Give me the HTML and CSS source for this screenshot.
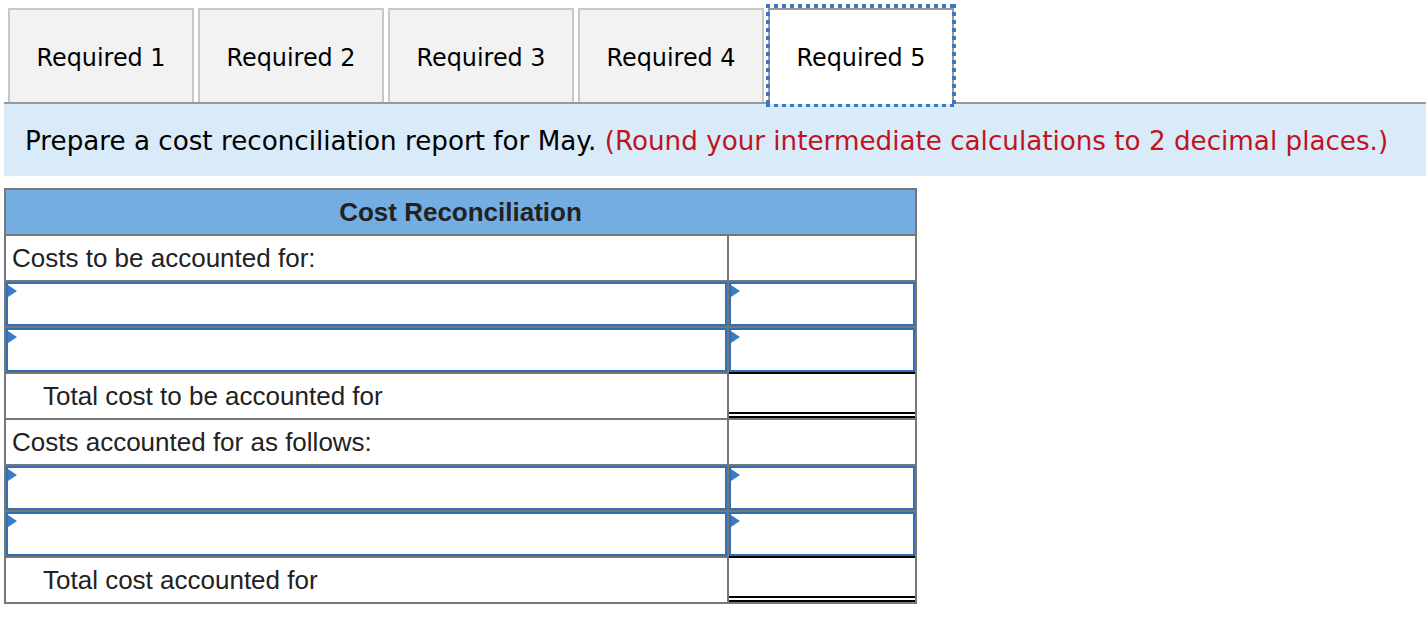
FILE: index.html
```html
<!DOCTYPE html>
<html lang="en">
<head>
    <meta charset="UTF-8">
    <meta name="viewport" content="width=device-width, initial-scale=1.0">
    <title>Cost Reconciliation</title>
    <link rel="stylesheet" href="styles.css">
</head>
<body>
    <div class="tabs">
        <div class="tab">Required 1</div>
        <div class="tab">Required 2</div>
        <div class="tab">Required 3</div>
        <div class="tab">Required 4</div>
        <div class="tab active">Required 5</div>
    </div>
    <div class="instructions">
        Prepare a cost reconciliation report for May. <span class="hint">(Round your intermediate calculations to 2 decimal places.)</span>
    </div>
    <div class="recon">
        <div class="recon-head">Cost Reconciliation</div>

        <div class="cell label">Costs to be accounted for:</div>
        <div class="cell"></div>
        <div class="cell"><div class="entry"></div></div>
        <div class="cell"><div class="entry"></div></div>
        <div class="cell"><div class="entry"></div></div>
        <div class="cell"><div class="entry"></div></div>
        <div class="cell label total">Total cost to be accounted for</div>
        <div class="cell sum"></div>

        <div class="cell label">Costs accounted for as follows:</div>
        <div class="cell"></div>
        <div class="cell"><div class="entry"></div></div>
        <div class="cell"><div class="entry"></div></div>
        <div class="cell"><div class="entry"></div></div>
        <div class="cell"><div class="entry"></div></div>
        <div class="cell label total">Total cost accounted for</div>
        <div class="cell sum"></div>
    </div>
</body>
</html>
```

FILE: styles.css
```css
body {
    margin: 0;
    padding: 0 0 0 4px;
    background: #fff;
    color: #000;
    font-family: "DejaVu Sans", Verdana, sans-serif;
}
.tabs {
    display: flex;
    align-items: flex-end;
    gap: 4px;
    padding: 8px 0 0 4px;
    border-bottom: 2px solid #999;
    height: 94px;
}
.tab {
    position: relative;
    box-sizing: border-box;
    width: 186px;
    height: 94px;
    display: flex;
    align-items: center;
    justify-content: center;
    background: #f2f2f2;
    border: 2px solid #c8c8c8;
    border-bottom: none;
    font-size: 23.9px;
    padding-top: 4px;
}
.tab.active {
    background: #fff;
    border-color: #999;
    height: 96px;
    margin-bottom: -2px;
    z-index: 1;
    padding-top: 2px;
}
.tab.active::after {
    content: "";
    position: absolute;
    left: -4px;
    right: -4px;
    top: -6px;
    bottom: -3px;
    background:
        repeating-linear-gradient(to right, #3a78c2 0 4px, transparent 4px 8px) top left / 100% 4px no-repeat,
        repeating-linear-gradient(to right, #3a78c2 0 4px, transparent 4px 8px) bottom left / 100% 3px no-repeat,
        repeating-linear-gradient(to bottom, #3a78c2 0 4px, transparent 4px 8px) top left / 4px 100% no-repeat,
        repeating-linear-gradient(to bottom, #3a78c2 0 4px, transparent 4px 8px) top right / 4px 100% no-repeat;
}
.instructions {
    height: 72px;
    box-sizing: border-box;
    padding: 22px 0 0 21px;
    background: #d9ebf9;
    font-size: 26.2px;
    color: #000;
}
.hint {
    color: #c0141c;
}
.recon {
    margin-top: 12px;
    width: 913px;
    box-sizing: border-box;
    border: 2px solid #777;
    background: #777;
    display: grid;
    grid-template-columns: 721px 186px;
    grid-auto-rows: 44px;
    gap: 2px;
    font-family: "Liberation Sans", Arial, sans-serif;
    font-size: 26px;
    color: #222;
}
.recon-head {
    grid-column: 1 / 3;
    background: #74ade2;
    font-weight: bold;
    text-align: center;
    line-height: 44px;
}
.cell {
    background: #fff;
    position: relative;
}
.label {
    line-height: 44px;
    padding-left: 6px;
}
.label.total {
    padding-left: 37px;
}
.sum {
    margin-top: -2px;
    border-top: 2px solid #000;
    border-bottom: 6px double #000;
}
.entry {
    position: absolute;
    inset: 0;
    border: 2px solid #2f6fb6;
}
.entry::before {
    content: "";
    position: absolute;
    left: 0;
    top: 1px;
    border-left: 9px solid #3a7bc6;
    border-top: 6px solid transparent;
    border-bottom: 6px solid transparent;
}
```
